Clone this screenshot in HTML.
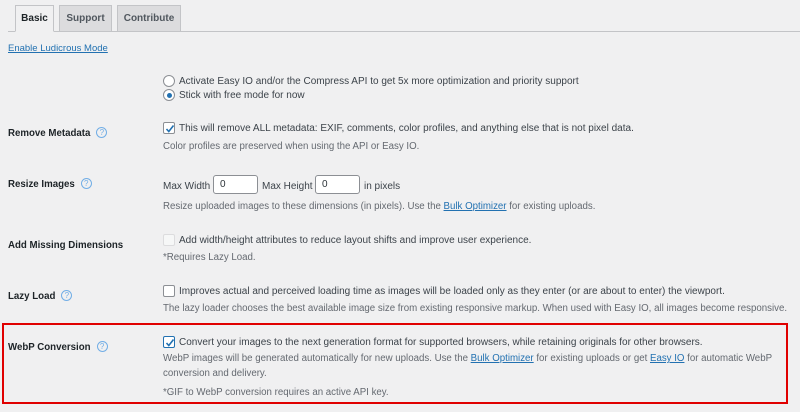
<!DOCTYPE html>
<html><head><style>
*{margin:0;padding:0;box-sizing:border-box}
body{width:800px;height:412px;background:#f0f0f1;font-family:"Liberation Sans",sans-serif;font-size:10px;color:#3c434a;position:relative;overflow:hidden}
.a{position:absolute;white-space:nowrap;line-height:13px}
.tab{position:absolute;top:5px;height:27px;border:1px solid #c3c4c7;background:#dcdcde;font-weight:bold;font-size:10px;color:#50575e;text-align:center;line-height:25px}
.lbl{font-weight:bold;color:#1d2327;font-size:9.7px}
.d{color:#646970;font-size:9.7px}
a{color:#2271b1;text-decoration:underline}
.q{display:inline-block;width:11px;height:11px;border:1px solid #72aee6;border-radius:50%;color:#72aee6;font-size:8px;line-height:9px;text-align:center;font-weight:normal;margin-left:6px;vertical-align:1px}
.cb{position:absolute;width:12px;height:12px;border:1px solid #8c8f94;border-radius:2px;background:#fff}
.cb svg{position:absolute;left:0;top:0}
.rd{position:absolute;width:12px;height:12px;border:1px solid #8c8f94;border-radius:50%;background:#fff}
.in{position:absolute;width:45px;height:19px;border:1px solid #8c8f94;border-radius:3px;background:#fff;padding-left:6px;line-height:17px;color:#2c3338}
</style></head><body>
<div style="position:absolute;left:8px;right:0;top:31px;border-top:1px solid #c3c4c7"></div>
<div class="tab" style="left:15px;width:39px;background:#f0f0f1;border-bottom-color:#f0f0f1;color:#1d2327">Basic</div>
<div class="tab" style="left:59px;width:53px">Support</div>
<div class="tab" style="left:117px;width:64px">Contribute</div>

<div class="a" style="left:8px;top:42px;font-size:9.5px"><a>Enable Ludicrous Mode</a></div>

<div class="rd" style="left:163px;top:75px"></div>
<div class="a" style="left:179px;top:75px">Activate Easy IO and/or the Compress API to get 5x more optimization and priority support</div>
<div class="rd" style="left:163px;top:89px"><div style="position:absolute;left:2.5px;top:2.5px;width:5px;height:5px;border-radius:50%;background:#2271b1"></div></div>
<div class="a" style="left:179px;top:89px">Stick with free mode for now</div>

<div class="a lbl" style="left:8px;top:127px">Remove Metadata<span class="q">?</span></div>
<div class="cb" style="left:163px;top:122px"><svg width="12" height="12"><path d="M2.5 6L4.8 8.5L9.5 2.5" stroke="#2271b1" stroke-width="1.6" fill="none"/></svg></div>
<div class="a" style="left:179px;top:122px">This will remove ALL metadata: EXIF, comments, color profiles, and anything else that is not pixel data.</div>
<div class="a d" style="left:163px;top:140px">Color profiles are preserved when using the API or Easy IO.</div>

<div class="a lbl" style="left:8px;top:178px">Resize Images<span class="q">?</span></div>
<div class="a" style="left:163px;top:180px">Max Width</div>
<div class="in" style="left:213px;top:175px">0</div>
<div class="a" style="left:262px;top:180px">Max Height</div>
<div class="in" style="left:315px;top:175px">0</div>
<div class="a" style="left:364px;top:180px">in pixels</div>
<div class="a d" style="left:163px;top:200px">Resize uploaded images to these dimensions (in pixels). Use the <a>Bulk Optimizer</a> for existing uploads.</div>

<div class="a lbl" style="left:8px;top:239px">Add Missing Dimensions</div>
<div class="cb" style="left:163px;top:234px;border-color:#dcdcde;background:#f6f7f7"></div>
<div class="a" style="left:179px;top:234px">Add width/height attributes to reduce layout shifts and improve user experience.</div>
<div class="a d" style="left:163px;top:251px">*Requires Lazy Load.</div>

<div class="a lbl" style="left:8px;top:290px">Lazy Load<span class="q">?</span></div>
<div class="cb" style="left:163px;top:285px"></div>
<div class="a" style="left:179px;top:285px">Improves actual and perceived loading time as images will be loaded only as they enter (or are about to enter) the viewport.</div>
<div class="a d" style="left:163px;top:302px">The lazy loader chooses the best available image size from existing responsive markup. When used with Easy IO, all images become responsive.</div>

<div style="position:absolute;left:2px;top:323px;width:786px;height:81px;border:2px solid #e00000"></div>
<div class="a lbl" style="left:8px;top:341px">WebP Conversion<span class="q">?</span></div>
<div class="cb" style="left:163px;top:336px;border-color:#2271b1"><svg width="12" height="12"><path d="M2.5 6L4.8 8.5L9.5 2.5" stroke="#2271b1" stroke-width="1.6" fill="none"/></svg></div>
<div class="a" style="left:179px;top:336px">Convert your images to the next generation format for supported browsers, while retaining originals for other browsers.</div>
<div class="a d" style="left:163px;top:352px">WebP images will be generated automatically for new uploads. Use the <a>Bulk Optimizer</a> for existing uploads or get <a>Easy IO</a> for automatic WebP</div>
<div class="a d" style="left:163px;top:367px">conversion and delivery.</div>
<div class="a d" style="left:163px;top:386px">*GIF to WebP conversion requires an active API key.</div>
</body></html>
